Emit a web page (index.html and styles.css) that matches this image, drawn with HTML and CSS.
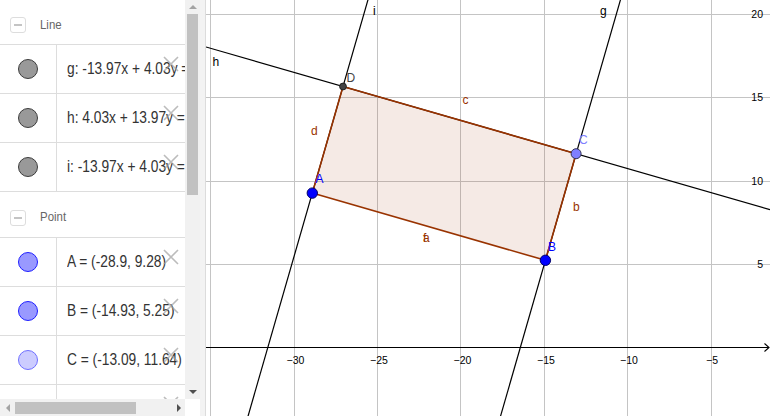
FILE: index.html
```html
<!DOCTYPE html>
<html>
<head>
<meta charset="utf-8">
<title>Parallelogram</title>
<link rel="stylesheet" href="styles.css">
</head>
<body>
<div class="app">
  <div class="panel">
    <div class="list">
      <div class="group-header"><span class="toggle"><span class="toggle-bar"></span></span><span class="group-title">Line</span></div>
      <div class="row"><div class="marker"><span class="dot dot-line"></span></div><div class="expr"><span class="expr-text">g: -13.97x + 4.03y = 229.73</span></div><svg class="del" viewBox="0 0 16 16"><path d="M1 1L15 15M15 1L1 15"/></svg></div>
      <div class="row"><div class="marker"><span class="dot dot-line"></span></div><div class="expr"><span class="expr-text">h: 4.03x + 13.97y = 109.86</span></div><svg class="del" viewBox="0 0 16 16"><path d="M1 1L15 15M15 1L1 15"/></svg></div>
      <div class="row"><div class="marker"><span class="dot dot-line"></span></div><div class="expr"><span class="expr-text">i: -13.97x + 4.03y = 441.13</span></div><svg class="del" viewBox="0 0 16 16"><path d="M1 1L15 15M15 1L1 15"/></svg></div>
      <div class="group-header group-header-point"><span class="toggle"><span class="toggle-bar"></span></span><span class="group-title">Point</span></div>
      <div class="row"><div class="marker"><span class="dot dot-point"></span></div><div class="expr"><span class="expr-text">A = (-28.9, 9.28)</span></div><svg class="del" viewBox="0 0 16 16"><path d="M1 1L15 15M15 1L1 15"/></svg></div>
      <div class="row"><div class="marker"><span class="dot dot-point"></span></div><div class="expr"><span class="expr-text">B = (-14.93, 5.25)</span></div><svg class="del" viewBox="0 0 16 16"><path d="M1 1L15 15M15 1L1 15"/></svg></div>
      <div class="row"><div class="marker"><span class="dot dot-point-light"></span></div><div class="expr"><span class="expr-text">C = (-13.09, 11.64)</span></div><svg class="del" viewBox="0 0 16 16"><path d="M1 1L15 15M15 1L1 15"/></svg></div>
      <div class="row"><div class="marker"><span class="dot dot-line"></span></div><div class="expr"><span class="expr-text">D = (-27.06, 15.67)</span></div><svg class="del" viewBox="0 0 16 16"><path d="M1 1L15 15M15 1L1 15"/></svg></div>
    </div>
    <div class="vscroll">
      <div class="arrow-box arrow-box-v"><span class="tri tri-up"></span></div>
      <div class="vthumb"></div>
      <div class="spacer"></div>
      <div class="arrow-box arrow-box-v"><span class="tri tri-down"></span></div>
    </div>
    <div class="hscroll">
      <div class="arrow-box arrow-box-left"><span class="tri tri-left"></span></div>
      <div class="hthumb"></div>
      <div class="spacer"></div>
      <div class="arrow-box arrow-box-right"><span class="tri tri-right"></span></div>
    </div>
    <div class="corner"></div>
  </div>
  <div class="divider"></div>
  <div class="graph">
    <svg class="plot" width="564" height="416" viewBox="206 0 564 416">
      <g class="grid">
        <line x1="210.5" y1="0" x2="210.5" y2="416"/>
        <line x1="294.5" y1="0" x2="294.5" y2="416"/>
        <line x1="377.5" y1="0" x2="377.5" y2="416"/>
        <line x1="460.5" y1="0" x2="460.5" y2="416"/>
        <line x1="544.5" y1="0" x2="544.5" y2="416"/>
        <line x1="627.5" y1="0" x2="627.5" y2="416"/>
        <line x1="711.5" y1="0" x2="711.5" y2="416"/>
        <line x1="206" y1="14.5" x2="770" y2="14.5"/>
        <line x1="206" y1="97.5" x2="770" y2="97.5"/>
        <line x1="206" y1="181.5" x2="770" y2="181.5"/>
        <line x1="206" y1="264.5" x2="770" y2="264.5"/>
      </g>
      <g class="axis">
        <line x1="206" y1="347.5" x2="769" y2="347.5"/>
        <polyline points="764.5,343.5 769,347.5 764.5,351.5"/>
      </g>
      <g class="ticklabels">
        <text x="295.5" y="364" text-anchor="middle">−30</text>
        <text x="379" y="364" text-anchor="middle">−25</text>
        <text x="462.5" y="364" text-anchor="middle">−20</text>
        <text x="546" y="364" text-anchor="middle">−15</text>
        <text x="629" y="364" text-anchor="middle">−10</text>
        <text x="712" y="364" text-anchor="middle">−5</text>
        <text x="763" y="18" text-anchor="end">20</text>
        <text x="763" y="101.3" text-anchor="end">15</text>
        <text x="763" y="184.8" text-anchor="end">10</text>
        <text x="763" y="268" text-anchor="end">5</text>
      </g>
      <g class="lines">
        <line x1="623.3" y1="-10" x2="497.7" y2="426"/>
        <line x1="370.8" y1="-10" x2="245.2" y2="426"/>
        <line x1="206" y1="47.0" x2="770" y2="209.6"/>
      </g>
      <polygon class="poly" points="312.3,193.1 545.4,260.3 576.1,153.7 343.0,86.5"/>
      <g class="pts">
        <circle class="pt-d" cx="343.0" cy="86.5" r="3.4"/>
        <circle class="pt-c" cx="576.1" cy="153.7" r="5"/>
        <circle class="pt-ab" cx="312.3" cy="193.1" r="5.2"/>
        <circle class="pt-ab" cx="545.4" cy="260.3" r="5.2"/>
      </g>
      <g class="labels">
        <text class="lbl-line" x="373" y="15">i</text>
        <text class="lbl-line" x="600" y="15">g</text>
        <text class="lbl-line" x="212.5" y="65.5">h</text>
        <text class="lbl-seg" x="462.5" y="104">c</text>
        <text class="lbl-seg" x="311" y="135">d</text>
        <text class="lbl-seg" x="573" y="211">b</text>
        <text class="lbl-seg" x="423" y="241.5">f</text>
        <text class="lbl-seg" x="423" y="241.5">a</text>
        <text class="lbl-d" x="346.5" y="81.7">D</text>
        <text class="lbl-ab" x="315.5" y="183.3">A</text>
        <text class="lbl-ab" x="548" y="250.7">B</text>
        <text class="lbl-c" x="579" y="144">C</text>
      </g>
    </svg>
  </div>
</div>
</body>
</html>
```

FILE: styles.css
```css
html, body {
  margin: 0;
  padding: 0;
  background: #ffffff;
}

body {
  font-family: "Liberation Sans", Arial, sans-serif;
  color: #333333;
}

.app {
  display: flex;
  width: 770px;
  height: 416px;
  overflow: hidden;
}

.panel {
  display: grid;
  grid-template-columns: 185px 15px;
  grid-template-rows: 399px 17px;
  width: 200px;
  flex: none;
  background: #ffffff;
}

.list {
  overflow: hidden;
  background: #ffffff;
}

.group-header {
  box-sizing: border-box;
  height: 45px;
  padding-top: 4px;
  display: flex;
  align-items: center;
  border-bottom: 1px solid #dddddd;
}

.group-header-point {
  height: 46px;
}

.toggle {
  box-sizing: border-box;
  width: 16px;
  height: 16px;
  margin-left: 10px;
  margin-top: 2px;
  border: 1px solid #dddddd;
  border-radius: 3px;
  display: flex;
  align-items: center;
  justify-content: center;
  flex: none;
}

.toggle-bar {
  width: 8px;
  height: 2px;
  background: #c4c4c4;
}

.group-title {
  display: inline-block;
  margin-left: 14px;
  font-size: 13px;
  color: #666666;
  transform: scaleX(0.88);
  transform-origin: left center;
}

.row {
  position: relative;
  box-sizing: border-box;
  height: 49px;
  display: flex;
  align-items: stretch;
  border-bottom: 1px solid #dddddd;
}

.marker {
  box-sizing: border-box;
  width: 57px;
  flex: none;
  border-right: 1px solid #dddddd;
  display: flex;
  align-items: center;
  justify-content: center;
  padding-right: 1px;
}

.dot {
  box-sizing: border-box;
  width: 20px;
  height: 20px;
  border-radius: 50%;
}

.dot-line {
  background: #999999;
  border: 1px solid #3c3c3c;
}

.dot-point {
  background: #9999ff;
  border: 1px solid #2020ff;
}

.dot-point-light {
  background: #ccccff;
  border: 1px solid #6f6fff;
}

.expr {
  padding-left: 10px;
  display: flex;
  align-items: center;
  white-space: nowrap;
  font-size: 16px;
  color: #333333;
  overflow: hidden;
  flex: 1;
}

.expr-text {
  display: inline-block;
  transform: scaleX(0.86);
  transform-origin: left center;
}

.del {
  position: absolute;
  right: 6px;
  top: 11px;
  width: 16px;
  height: 16px;
  fill: none;
  stroke: #a0a0a0;
  stroke-width: 1.6;
  opacity: 0.7;
}

.vscroll {
  background: #f1f1f1;
  display: flex;
  flex-direction: column;
}

.arrow-box {
  display: flex;
  align-items: center;
  justify-content: center;
  flex: none;
}

.arrow-box-v {
  height: 14px;
}

.vthumb {
  height: 181px;
  margin: 0 2px;
  background: #c1c1c1;
  flex: none;
}

.spacer {
  flex: 1;
}

.hscroll {
  background: #f1f1f1;
  display: flex;
  align-items: center;
}

.arrow-box-left {
  width: 15px;
  height: 17px;
}

.arrow-box-right {
  width: 13px;
  height: 17px;
}

.hthumb {
  width: 121px;
  height: 12px;
  background: #c1c1c1;
  flex: none;
}

.corner {
  background: #ffffff;
}

.tri {
  width: 0;
  height: 0;
}

.tri-up {
  border-left: 4px solid transparent;
  border-right: 4px solid transparent;
  border-bottom: 4px solid #a3a3a3;
}

.tri-down {
  border-left: 4px solid transparent;
  border-right: 4px solid transparent;
  border-top: 4px solid #505050;
}

.tri-left {
  border-top: 4px solid transparent;
  border-bottom: 4px solid transparent;
  border-right: 4px solid #a3a3a3;
}

.tri-right {
  border-top: 4px solid transparent;
  border-bottom: 4px solid transparent;
  border-left: 4px solid #505050;
}

.divider {
  box-sizing: border-box;
  width: 6px;
  flex: none;
  background: #f3f3f3;
  border-right: 1px solid #dcdcdc;
}

.graph {
  flex: 1;
  background: #ffffff;
  overflow: hidden;
}

.plot {
  display: block;
}

.grid line {
  stroke: #c4c4c4;
  stroke-width: 1;
}

.axis line,
.axis polyline {
  stroke: #000000;
  stroke-width: 1.1;
  fill: none;
}

.ticklabels text {
  font-family: "Liberation Sans", Arial, sans-serif;
  font-size: 10.5px;
  fill: #000000;
}

.lines line {
  stroke: #000000;
  stroke-width: 1.2;
}

.poly {
  fill: rgba(153, 51, 0, 0.1);
  stroke: #993300;
  stroke-width: 1.6;
  stroke-linejoin: round;
}

.pt-ab {
  fill: #0000ff;
  stroke: #000066;
  stroke-width: 1;
}

.pt-c {
  fill: #7f7fff;
  stroke: #333355;
  stroke-width: 1;
}

.pt-d {
  fill: #444444;
  stroke: #222222;
  stroke-width: 1;
}

.labels text {
  font-family: "Liberation Sans", Arial, sans-serif;
  font-size: 12px;
}

.lbl-line {
  fill: #000000;
}

.lbl-seg {
  fill: #993300;
}

.lbl-d {
  fill: #444444;
}

.lbl-ab {
  fill: #0000ff;
}

.lbl-c {
  fill: #7f7fff;
}
```
